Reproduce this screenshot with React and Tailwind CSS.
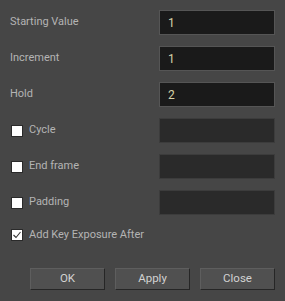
import React from "react";

const font = { fontFamily: 'Roboto, "Liberation Sans", sans-serif' };

function Field({ value, dark }) {
  return (
    <div
      className={
        "w-[116px] h-[25px] flex items-center pl-[8px] text-[12px] " +
        (dark
          ? "bg-[#1a1a1a] border border-[#555555] text-[#d6d2a8]"
          : "bg-[#2a2a2a] border border-[#3c3c3c]")
      }
    >
      {value}
    </div>
  );
}

function Check({ checked }) {
  return (
    <div className="w-[12px] h-[12px] bg-white border border-[#2a2a2a] flex items-center justify-center">
      {checked && (
        <svg width="10" height="10" viewBox="0 0 10 10">
          <path d="M1.5 5 L4 7.5 L8.5 2" fill="none" stroke="#333" strokeWidth="1.1" />
        </svg>
      )}
    </div>
  );
}

function Btn({ children }) {
  return (
    <div className="w-[75px] h-[22px] bg-[#505050] border-t border-l border-[#5e5e5e] border-r border-b border-r-[#262626] border-b-[#262626] flex items-center justify-center text-[11.5px] text-[#d2d2d2]">
      {children}
    </div>
  );
}

export default function App() {
  return (
    <div
      className="w-[285px] h-[301px] bg-[#464646] text-[#b4b4b4] text-[11px] pt-[10px] px-[10px] flex flex-col"
      style={font}
    >
      <div className="flex flex-col gap-[11px]">
        <div className="flex items-center justify-between h-[25px]">
          <span>Starting Value</span>
          <Field value="1" dark />
        </div>
        <div className="flex items-center justify-between h-[25px]">
          <span>Increment</span>
          <Field value="1" dark />
        </div>
        <div className="flex items-center justify-between h-[25px]">
          <span>Hold</span>
          <Field value="2" dark />
        </div>
        <div className="flex items-center justify-between h-[25px]">
          <div className="flex items-center gap-[6px] pl-px">
            <Check />
            <span>Cycle</span>
          </div>
          <Field />
        </div>
        <div className="flex items-center justify-between h-[25px]">
          <div className="flex items-center gap-[6px] pl-px">
            <Check />
            <span>End frame</span>
          </div>
          <Field />
        </div>
        <div className="flex items-center justify-between h-[25px]">
          <div className="flex items-center gap-[6px] pl-px">
            <Check />
            <span>Padding</span>
          </div>
          <Field />
        </div>
      </div>
      <div className="flex items-center gap-[6px] pl-px mt-[14px] h-[12px]">
        <Check checked />
        <span>Add Key Exposure After</span>
      </div>
      <div className="flex justify-end gap-[10px] mt-[27px]">
        <Btn>OK</Btn>
        <Btn>Apply</Btn>
        <Btn>Close</Btn>
      </div>
    </div>
  );
}
